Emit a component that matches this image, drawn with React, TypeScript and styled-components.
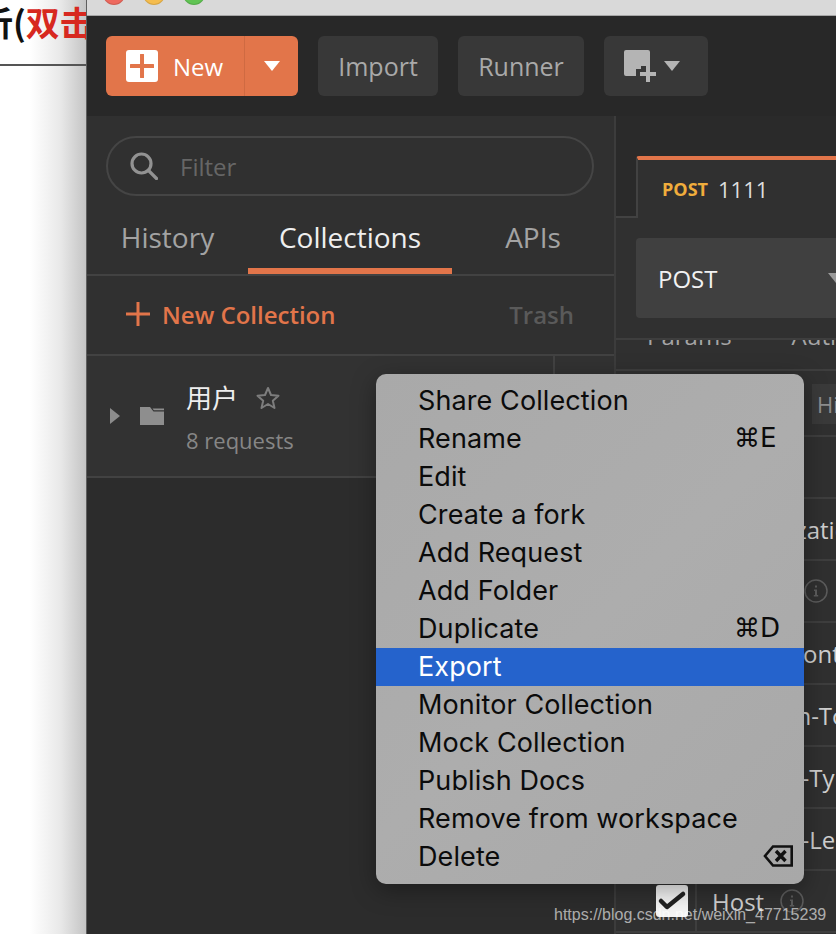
import React from "react";
import styled, { createGlobalStyle } from "styled-components";

const Global = createGlobalStyle`
  html, body { margin: 0; padding: 0; background: #fff; }
  * { box-sizing: border-box; }
`;

const orange = "#e2754a";

const Page = styled.div`
  position: relative;
  display: flex;
  width: 836px;
  height: 934px;
  overflow: hidden;
  font-family: "Open Sans", "Noto Sans CJK SC", sans-serif;
`;

const Backdrop = styled.div`
  width: 86px;
  flex: none;
  height: 100%;
  overflow: hidden;
  background: linear-gradient(90deg, #fff 0, #fff 30px, #e9e9e9 60px, #c4c4c4 86px);
`;

const Heading = styled.div`
  height: 66px;
  padding-top: 4px;
  margin-left: -21px;
  width: 200px;
  border-bottom: 2px solid #555;
  font: 700 34px/36px "Noto Sans CJK SC", sans-serif;
  color: #111;
  white-space: nowrap;
  em { font-style: normal; color: #d7281f; }
`;

const Win = styled.div`
  flex: 1;
  min-width: 0;
  display: flex;
  flex-direction: column;
  border-left: 1px solid #5e5e5e;
  background: #2c2c2c;
`;

const TitleBar = styled.div`
  height: 16px;
  flex: none;
  display: flex;
  gap: 18px;
  padding-left: 16px;
  overflow: hidden;
  background: #d9d9d9;
  border-bottom: 1px solid #a6a6a6;
`;

const Light = styled.span<{ $c: string }>`
  width: 22px;
  height: 22px;
  margin-top: -17px;
  border-radius: 50%;
  background: ${(p) => p.$c};
  border: 1px solid rgba(0, 0, 0, 0.12);
`;

const Toolbar = styled.div`
  height: 100px;
  flex: none;
  display: flex;
  gap: 20px;
  padding: 20px 19px;
  background: #282828;
`;

const NewBtn = styled.div`
  width: 192px;
  height: 60px;
  display: flex;
  border-radius: 6px;
  background: ${orange};
  color: #fff;
  font-size: 24px;
`;

const NewMain = styled.div`
  width: 139px;
  display: flex;
  align-items: center;
  gap: 15px;
  padding-left: 20px;
  border-right: 1px solid #cf6a42;
`;

const NewIcon = styled.span`
  width: 32px;
  height: 32px;
  border-radius: 3px;
  background: #fff;
  display: flex;
  align-items: center;
  justify-content: center;
`;

const NewCaret = styled.div`
  flex: 1;
  display: flex;
  align-items: center;
  justify-content: center;
`;

const ToolBtn = styled.div<{ $w: number; $pr?: number }>`
  width: ${(p) => p.$w}px;
  height: 60px;
  display: flex;
  align-items: center;
  justify-content: center;
  gap: 8px;
  padding-right: ${(p) => p.$pr ?? 0}px;
  border-radius: 6px;
  background: #383838;
  color: #a9a9a9;
  font-size: 25px;
  font-weight: 500;
`;

const Body = styled.div`
  flex: 1;
  min-height: 0;
  display: flex;
`;

const Sidebar = styled.aside`
  width: 529px;
  flex: none;
  display: flex;
  flex-direction: column;
  background: #2c2c2c;
  border-right: 2px solid #3c3c3c;
`;

const SideTop = styled.div`
  background: #303030;
`;

const FilterWrap = styled.div`
  padding: 20px 20px 0 19px;
`;

const Filter = styled.div`
  height: 60px;
  display: flex;
  align-items: center;
  gap: 22px;
  padding-left: 22px;
  border: 2px solid #454545;
  border-radius: 30px;
  color: #666;
  font-size: 24px;
`;

const Tabs = styled.div`
  display: grid;
  grid-template-columns: 161px 204px 1fr;
  height: 80px;
  border-bottom: 2px solid #424242;
`;

const Tab = styled.div<{ $on?: boolean }>`
  display: flex;
  align-items: center;
  justify-content: center;
  padding-top: 10px;
  font-size: 28px;
  color: ${(p) => (p.$on ? "#eee" : "#a3a3a3")};
  border-bottom: 6px solid ${(p) => (p.$on ? orange : "transparent")};
`;

const ActionRow = styled.div`
  height: 80px;
  display: flex;
  align-items: center;
  padding: 0 40px 2px 39px;
  border-bottom: 2px solid #424242;
`;

const NewColl = styled.div`
  display: flex;
  align-items: center;
  gap: 12px;
  color: ${orange};
  font-size: 24px;
  font-weight: 600;
`;

const Trash = styled.div`
  margin-left: auto;
  color: #5a5a5a;
  font-size: 24px;
  font-weight: 600;
`;

const CollRow = styled.div`
  height: 122px;
  display: flex;
  align-items: center;
  padding-left: 23px;
  background: #323232;
  border-bottom: 2px solid #424242;
`;

const CollIcons = styled.div`
  display: flex;
  align-items: center;
  gap: 20px;
`;

const CollText = styled.div`
  width: 367px;
  margin-left: 22px;
  padding-top: 4px;
  display: flex;
  flex-direction: column;
  gap: 10px;
`;

const CollName = styled.div`
  display: flex;
  align-items: center;
  gap: 18px;
  color: #eee;
  font-size: 26px;
  line-height: 34px;
`;

const CollMeta = styled.div`
  color: #868686;
  font-size: 22px;
  line-height: 30px;
`;

const CollSplit = styled.div`
  align-self: stretch;
  border-left: 2px solid #424242;
`;

const Main = styled.main`
  flex: 1;
  min-width: 0;
  display: flex;
  flex-direction: column;
  background: #303030;
`;

const TabStrip = styled.div`
  height: 102px;
  flex: none;
  display: flex;
  align-items: flex-end;
  padding-left: 20px;
  background: #2a2a2a;
  border-bottom: 2px solid #424242;
`;

const ReqTab = styled.div`
  flex: 1;
  height: 62px;
  margin-bottom: -2px;
  display: flex;
  align-items: center;
  gap: 10px;
  padding-left: 24px;
  background: #303030;
  border-left: 2px solid #424242;
  border-top: 4px solid ${orange};
  border-radius: 3px 0 0 0;
  color: #ddd;
  font-size: 22px;
  b { color: #f0ad3c; font-size: 18px; font-weight: 700; }
`;

const UrlRow = styled.div`
  height: 120px;
  flex: none;
  padding: 20px 0 0 20px;
`;

const Method = styled.div`
  width: 208px;
  height: 80px;
  display: flex;
  align-items: center;
  justify-content: space-between;
  padding-left: 22px;
  background: #404040;
  border-radius: 4px 0 0 4px;
  color: #f2f2f2;
  font-size: 24px;
  font-weight: 500;
`;

const ParamTabs = styled.div`
  height: 33px;
  flex: none;
  display: flex;
  gap: 60px;
  padding-left: 31px;
  overflow: hidden;
  border-top: 2px solid #3e3e3e;
  border-bottom: 2px solid #3e3e3e;
  color: #a5a5a5;
  font-size: 24px;
  line-height: 30px;
  white-space: nowrap;
  span { margin-top: -19px; }
`;

const HeaderBar = styled.div`
  height: 66px;
  flex: none;
  display: flex;
  justify-content: flex-end;
  padding-top: 13px;
  border-bottom: 2px solid #3e3e3e;
`;

const HideBtn = styled.div`
  width: 24px;
  height: 40px;
  padding-left: 5px;
  overflow: hidden;
  background: #3a3a3a;
  color: #8e8e8e;
  font-size: 22px;
  line-height: 40px;
  white-space: nowrap;
`;

const Row = styled.div`
  height: 62px;
  flex: none;
  display: flex;
  border-bottom: 2px solid #3e3e3e;
`;

const CheckCell = styled.div`
  width: 81px;
  flex: none;
  display: flex;
  align-items: center;
  justify-content: flex-end;
  padding-right: 7px;
  border-right: 2px solid #3e3e3e;
`;

const Check = styled.span`
  width: 32px;
  height: 32px;
  border-radius: 3px;
  background: #f4f4f4;
  display: flex;
`;

const KeyCell = styled.div`
  display: flex;
  align-items: center;
  gap: 16px;
  padding-left: 15px;
  color: #cfcfcf;
  font-size: 24px;
  white-space: nowrap;
`;

const Menu = styled.div`
  position: absolute;
  left: 376px;
  top: 374px;
  width: 428px;
  padding: 8px 0;
  border-radius: 10px;
  background: linear-gradient(135deg, #a9a9a9, #adadad 50%, #a8a8a8);
  box-shadow: 0 6px 24px rgba(0, 0, 0, 0.35);
  font-family: Inter, "Liberation Sans", sans-serif;
  color: #0b0b0b;
  font-size: 27px;
`;

const Item = styled.div<{ $on?: boolean }>`
  height: 38px;
  display: flex;
  align-items: center;
  justify-content: space-between;
  padding: 0 0 2px 42px;
  letter-spacing: 0.1px;
  background: ${(p) => (p.$on ? "#2563cc" : "transparent")};
  color: ${(p) => (p.$on ? "#fff" : "inherit")};
`;

const Shortcut = styled.span`
  width: 70px;
  display: flex;
  align-items: center;
  font-family: "DejaVu Sans", sans-serif;
  font-size: 26px;
  svg { margin-left: 29px; }
`;

const Watermark = styled.div`
  position: absolute;
  left: 554px;
  top: 905px;
  font: 16px/20px "Liberation Sans", Arial, sans-serif;
  color: rgba(255, 255, 255, 0.62);
  white-space: nowrap;
`;

const Down = ({ c, w = 16, h = 10 }: { c: string; w?: number; h?: number }) => (
  <svg width={w} height={h} viewBox="0 0 16 10"><path d="M0 0h16L8 10z" fill={c} /></svg>
);

const Info = () => (
  <svg width="24" height="24" viewBox="0 0 24 24" fill="none">
    <circle cx="12" cy="12" r="11" stroke="#5c5c5c" strokeWidth="1.5" />
    <path d="M11 6.5h2v2h-2zM10 10.5h3V16h1.2v1.4H9.8V16H11v-4.1h-1z" fill="#5c5c5c" />
  </svg>
);

const menu: { t: string; s?: string; back?: boolean; on?: boolean }[] = [
  { t: "Share Collection" },
  { t: "Rename", s: "⌘E" },
  { t: "Edit" },
  { t: "Create a fork" },
  { t: "Add Request" },
  { t: "Add Folder" },
  { t: "Duplicate", s: "⌘D" },
  { t: "Export", on: true },
  { t: "Monitor Collection" },
  { t: "Mock Collection" },
  { t: "Publish Docs" },
  { t: "Remove from workspace" },
  { t: "Delete", back: true },
];

const rows: { k: string; info?: boolean }[] = [
  { k: "Authorization" },
  { k: "Cookie", info: true },
  { k: "Cache-Control" },
  { k: "Postman-Token" },
  { k: "Content-Type" },
  { k: "Content-Length" },
  { k: "Host", info: true },
];

export default function App() {
  return (
    <Page>
      <Global />
      <Backdrop>
        <Heading>析(<em>双击</em></Heading>
      </Backdrop>
      <Win>
        <TitleBar>
          <Light $c="#ee6a5f" />
          <Light $c="#f5bd4f" />
          <Light $c="#61c454" />
        </TitleBar>
        <Toolbar>
          <NewBtn>
            <NewMain>
              <NewIcon>
                <svg width="24" height="24" viewBox="0 0 24 24"><path d="M12 2v20M2 12h20" stroke={orange} strokeWidth="3.600" strokeLinecap="round" transform="translate(-1.300 -1.300) scale(1.110)" /></svg>
              </NewIcon>
              New
            </NewMain>
            <NewCaret><Down c="#fff" /></NewCaret>
          </NewBtn>
          <ToolBtn $w={120}>Import</ToolBtn>
          <ToolBtn $w={126}>Runner</ToolBtn>
          <ToolBtn $w={104} $pr={8}>
            <svg width="32" height="32" viewBox="0 0 32 32">
              <path d="M2 0h22a2 2 0 0 1 2 2v14h-9v3h-5v7H2a2 2 0 0 1-2-2V2a2 2 0 0 1 2-2z" fill="#b4b4b4" />
              <path d="M22 16h4v6h6v4h-6v6h-4v-6h-6v-4h6z" fill="#b4b4b4" />
            </svg>
            <Down c="#b4b4b4" />
          </ToolBtn>
        </Toolbar>
        <Body>
          <Sidebar>
            <SideTop>
              <FilterWrap>
                <Filter>
                  <svg width="28" height="28" viewBox="0 0 28 28" fill="none" stroke="#929292" strokeWidth="3.200">
                    <circle cx="11.500" cy="11.500" r="9.500" />
                    <path d="M18.500 18.500l8 8" strokeLinecap="round" />
                  </svg>
                  Filter
                </Filter>
              </FilterWrap>
              <Tabs>
                <Tab>History</Tab>
                <Tab $on>Collections</Tab>
                <Tab>APIs</Tab>
              </Tabs>
              <ActionRow>
                <NewColl>
                  <svg width="24" height="24" viewBox="0 0 24 24"><path d="M10.500 0h3v10.500H24v3H13.500V24h-3V13.500H0v-3h10.500z" fill={orange} /></svg>
                  New Collection
                </NewColl>
                <Trash>Trash</Trash>
              </ActionRow>
              <CollRow>
                <CollIcons>
                  <svg width="10" height="16" viewBox="0 0 10 16"><path d="M0 0l10 8-10 8z" fill="#8c8c8c" /></svg>
                  <svg width="24" height="18" viewBox="0 0 24 18"><path d="M0 0h10l3.500 4.500H24V18H0z" fill="#8e8e8e" /><path d="M12.500 1.500H24v1.800H13.800z" fill="#8e8e8e" /></svg>
                </CollIcons>
                <CollText>
                  <CollName>
                    用户
                    <svg width="24" height="24" viewBox="0 0 24 24" fill="none" stroke="#7d7d7d" strokeWidth="2"><path d="M12 2l3 7 7.500.7-5.700 5 1.700 7.300L12 18l-6.500 4 1.700-7.300-5.700-5L9 9z" strokeLinejoin="round" /></svg>
                  </CollName>
                  <CollMeta>8 requests</CollMeta>
                </CollText>
                <CollSplit />
              </CollRow>
            </SideTop>
          </Sidebar>
          <Main>
            <TabStrip>
              <ReqTab><b>POST</b>1111</ReqTab>
            </TabStrip>
            <UrlRow>
              <Method>POST<Down c="#9a9a9a" /></Method>
            </UrlRow>
            <ParamTabs>
              <span>Params</span>
              <span>Authorization</span>
            </ParamTabs>
            <HeaderBar>
              <HideBtn>Hide</HideBtn>
            </HeaderBar>
            <Row />
            {rows.map((r) => (
              <Row key={r.k}>
                <CheckCell>
                  <Check>
                    <svg width="32" height="32" viewBox="0 0 32 32"><path d="M5 16l6 6 16-13" fill="none" stroke="#222" strokeWidth="4.500" strokeLinecap="round" strokeLinejoin="round" /></svg>
                  </Check>
                </CheckCell>
                <KeyCell>
                  {r.k}
                  {r.info && <Info />}
                </KeyCell>
              </Row>
            ))}
          </Main>
        </Body>
      </Win>
      <Menu>
        {menu.map((m) => (
          <Item key={m.t} $on={m.on}>
            {m.t}
            {m.s && <Shortcut>{m.s}</Shortcut>}
            {m.back && (
              <Shortcut>
                <svg width="30" height="22" viewBox="0 0 30 22" fill="none" stroke="#111" strokeWidth="2.600">
                  <path d="M28.700 1.500H10L2 11l8 9.500h18.700z" />
                  <path d="M13 6l9.500 10M22.500 6L13 16" strokeWidth="3.400" />
                </svg>
              </Shortcut>
            )}
          </Item>
        ))}
      </Menu>
      <Watermark>https://blog.csdn.net/weixin_47715239</Watermark>
    </Page>
  );
}
